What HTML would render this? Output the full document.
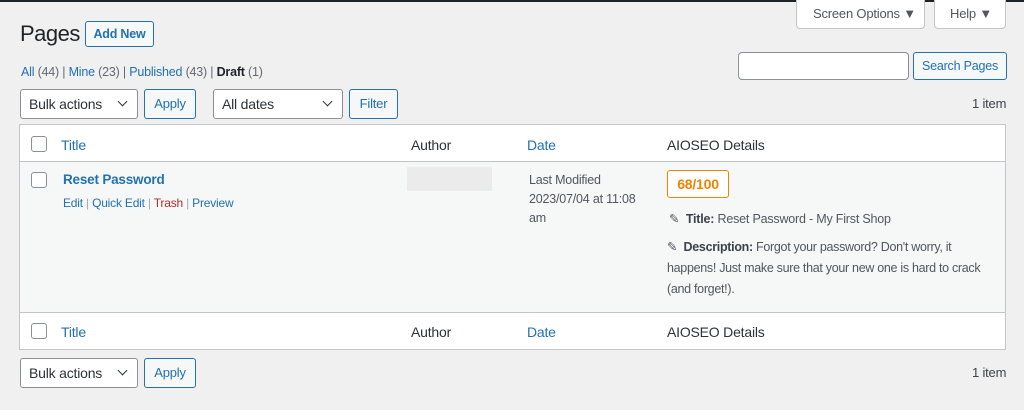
<!DOCTYPE html>
<html><head><style>
body{margin:0;width:1024px;height:410px;background:#f0f0f1;font-family:"Liberation Sans",sans-serif;font-size:13px;color:#3c434a;position:relative;overflow:hidden;letter-spacing:-0.2px}
.a{position:absolute;white-space:nowrap}
a{color:#2271b1;text-decoration:none}
.btn{position:absolute;border:1px solid #2271b1;color:#2271b1;background:#f6f7f7;border-radius:3px;box-sizing:border-box;text-align:center;font-size:13px}
.sel{position:absolute;border:1px solid #8c8f94;background:#fff;border-radius:3px;box-sizing:border-box;padding-left:8px;color:#2c3338;font-size:14px}
.sel:after{content:"";position:absolute;right:11px;top:8px;width:6px;height:6px;border-right:1.5px solid #2c3338;border-bottom:1.5px solid #2c3338;transform:rotate(45deg)}
.cb{position:absolute;width:14px;height:14px;border:1px solid #8c8f94;border-radius:3px;background:#fff}
.tl{position:absolute;background:#fff;border:1px solid #c3c4c7;left:19px;width:987px;box-sizing:border-box}
</style></head><body>
<div class="a" style="left:0;top:0;width:1024px;height:2px;background:#1d2327"></div>
<div class="a" style="left:796px;top:-1px;width:129px;height:30px;background:#fff;border:1px solid #c3c4c7;border-top:none;border-radius:0 0 4px 4px;box-sizing:border-box;line-height:30px;padding-left:16px;color:#50575e">Screen Options ▼</div>
<div class="a" style="left:934px;top:-1px;width:72px;height:30px;background:#fff;border:1px solid #c3c4c7;border-top:none;border-radius:0 0 4px 4px;box-sizing:border-box;line-height:30px;padding-left:15px;color:#50575e">Help ▼</div>
<div class="a" style="left:20px;top:21px;font-size:22px;color:#1d2327;letter-spacing:-0.5px">Pages</div>
<div class="btn" style="left:85px;top:21px;width:69px;height:26px;line-height:24px;font-weight:600;font-size:12.5px;background:#f6f7f7">Add New</div>
<div class="a" style="left:21px;top:65px;color:#646970;font-size:12.5px"><a>All</a> (44) | <a>Mine</a> (23) | <a>Published</a> (43) | <b style="color:#1d2327">Draft</b> (1)</div>
<div class="a" style="left:738px;top:52px;width:171px;height:28px;border:1px solid #8c8f94;border-radius:4px;background:#fff;box-sizing:border-box"></div>
<div class="btn" style="left:913px;top:52px;width:94px;height:28px;line-height:26px;font-size:12.5px">Search Pages</div>
<div class="sel" style="left:20px;top:89px;width:118px;height:30px;line-height:28px">Bulk actions</div>
<div class="btn" style="left:144px;top:89px;width:52px;height:30px;line-height:28px">Apply</div>
<div class="sel" style="left:213px;top:89px;width:130px;height:30px;line-height:28px">All dates</div>
<div class="btn" style="left:349px;top:89px;width:49px;height:30px;line-height:28px">Filter</div>
<div class="a" style="left:972px;top:96px;color:#3c434a">1 item</div>

<div class="tl" style="top:124px;height:38px"></div>
<div class="tl" style="top:161px;height:152px;background:#f6f7f7"></div>
<div class="tl" style="top:312px;height:38px"></div>
<div class="cb" style="left:31px;top:136px"></div>
<div class="a" style="left:61px;top:137px;font-size:14px"><a>Title</a></div>
<div class="a" style="left:411px;top:137px;font-size:14px;color:#2c3338">Author</div>
<div class="a" style="left:527px;top:137px;font-size:14px"><a>Date</a></div>
<div class="a" style="left:667px;top:137px;font-size:14px;color:#2c3338">AIOSEO Details</div>

<div class="cb" style="left:31px;top:172px"></div>
<div class="a" style="left:63px;top:172px;font-size:13.5px;font-weight:bold"><a>Reset Password</a></div>
<div class="a" style="left:63px;top:196px;font-size:12px;color:#a7aaad"><a>Edit</a> | <a>Quick Edit</a> | <a style="color:#b32d2e">Trash</a> | <a>Preview</a></div>
<div class="a" style="left:407px;top:167px;width:85px;height:24px;background:#ebebec"></div>
<div class="a" style="left:529px;top:171px;line-height:19px;color:#50575e;font-size:12.5px">Last Modified<br>2023/07/04 at 11:08<br>am</div>
<div class="a" style="left:667px;top:170px;width:62px;height:28px;border:1px solid #f18200;border-radius:3px;box-sizing:border-box;background:#fff;color:#f18200;font-weight:bold;font-size:14px;line-height:26px;text-align:center">68/100</div>
<div class="a" style="left:669px;top:211px;color:#50575e;font-size:12.5px"><span style="color:#50575e">✎</span>&nbsp; <b style="color:#3c434a">Title:</b> Reset Password - My First Shop</div>
<div class="a" style="left:667px;top:237px;width:335px;line-height:21px;color:#50575e;white-space:normal;font-size:12.5px;letter-spacing:-0.3px"><span>✎</span>&nbsp; <b style="color:#3c434a">Description:</b> Forgot your password? Don't worry, it happens! Just make sure that your new one is hard to crack (and forget!).</div>

<div class="cb" style="left:31px;top:323px"></div>
<div class="a" style="left:61px;top:324px;font-size:14px"><a>Title</a></div>
<div class="a" style="left:411px;top:324px;font-size:14px;color:#2c3338">Author</div>
<div class="a" style="left:527px;top:324px;font-size:14px"><a>Date</a></div>
<div class="a" style="left:667px;top:324px;font-size:14px;color:#2c3338">AIOSEO Details</div>

<div class="sel" style="left:20px;top:358px;width:118px;height:30px;line-height:28px">Bulk actions</div>
<div class="btn" style="left:144px;top:358px;width:52px;height:30px;line-height:28px">Apply</div>
<div class="a" style="left:972px;top:365px">1 item</div>
</body></html>
